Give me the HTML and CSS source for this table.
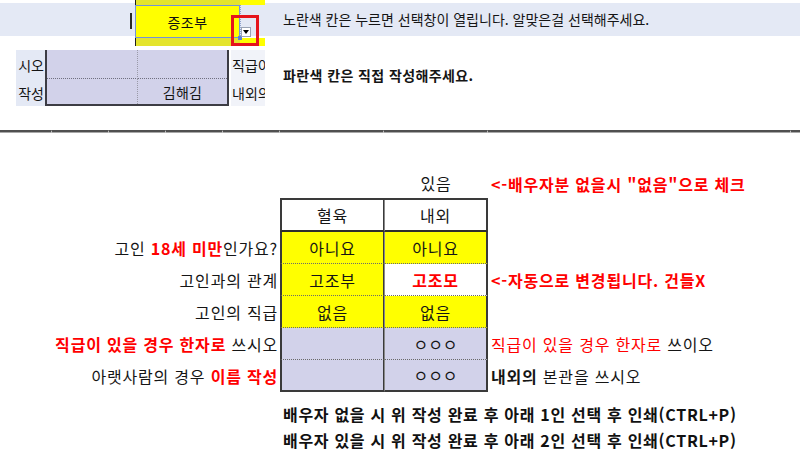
FILE: index.html
```html
<!DOCTYPE html>
<html lang="ko">
<head>
<meta charset="utf-8">
<title>시트</title>
<link rel="stylesheet" href="styles.css">
</head>
<body>
<div class="top">
  <div class="r1">
    <div class="lead"><span class="caret"></span></div>
    <div class="ycell">
      <div class="ystrip top-strip"></div>
      <div class="ysel">증조부</div>
      <div class="ystrip bot-strip"></div>
    </div>
    <div class="yright">
      <div class="yr-top"></div>
      <div class="yr-mid"></div>
      <div class="yr-bot"></div>
    </div>
    <div class="note1">노란색 칸은 누르면 선택창이 열립니다. 알맞은걸 선택해주세요.</div>
    <span class="handle"></span>
    <span class="dd"><span class="tri"></span></span>
    <span class="redbox"></span>
  </div>
  <div class="r2">
    <div class="pad"></div>
    <div class="lbl">
      <div class="lc lc1">시오</div>
      <div class="lc lc2">작성</div>
    </div>
    <div class="lav">
      <div class="lv a"></div>
      <div class="lv b"></div>
      <div class="lv c"></div>
      <div class="lv d">김해김</div>
    </div>
    <div class="clip">
      <div class="cc cc1"><span>직급이</span></div>
      <div class="cc cc2"><span>내외의</span></div>
    </div>
    <div class="note2">파란색 칸은 직접 작성해주세요.</div>
  </div>
</div>

<div class="divider">
  <span class="seg" style="width:52px"></span>
  <span class="seg" style="width:57px"></span>
  <span class="seg" style="width:57px"></span>
  <span class="seg" style="width:57px"></span>
  <span class="seg" style="width:57px"></span>
  <span class="seg" style="width:104px"></span>
  <span class="seg" style="width:104px"></span>
  <span class="seg" style="width:303px"></span>
  <span class="seg seg-last"></span>
</div>

<div class="grid">
  <div class="lab"></div>
  <div class="blank"></div>
  <div class="above">있음</div>
  <div class="nt red b">&lt;-배우자분 없을시 "없음"으로 체크</div>

  <div class="lab"></div>
  <div class="t t1 head">혈육</div>
  <div class="t t2 head">내외</div>
  <div class="nt"></div>

  <div class="lab">고인&nbsp;<span class="red b">18세 미만</span>인가요?</div>
  <div class="t t1 yel">아니요</div>
  <div class="t t2 yel">아니요</div>
  <div class="nt"></div>

  <div class="lab">고인과의 관계</div>
  <div class="t t1 yel">고조부</div>
  <div class="t t2 red b">고조모</div>
  <div class="nt red b">&lt;-자동으로 변경됩니다. 건들X</div>

  <div class="lab">고인의 직급</div>
  <div class="t t1 yel">없음</div>
  <div class="t t2 yel">없음</div>
  <div class="nt"></div>

  <div class="lab"><span class="red b">직급이 있을 경우 한자로</span>&nbsp;쓰시오</div>
  <div class="t t1 lavc"></div>
  <div class="t t2 lavc">ㅇㅇㅇ</div>
  <div class="nt"><span class="red">직급이 있을 경우 한자로</span>&nbsp;쓰이오</div>

  <div class="lab">아랫사람의 경우&nbsp;<span class="red b">이름 작성</span></div>
  <div class="t t1 lavc last">&nbsp;</div>
  <div class="t t2 lavc last">ㅇㅇㅇ</div>
  <div class="nt"><span class="b">내외의</span>&nbsp;본관을 쓰시오</div>
</div>

<div class="foot">
  <div>배우자 없을 시 위 작성 완료 후 아래 1인 선택 후 인쇄(CTRL+P)</div>
  <div>배우자 있을 시 위 작성 완료 후 아래 2인 선택 후 인쇄(CTRL+P)</div>
</div>
</body>
</html>
```

FILE: styles.css
```css
* { box-sizing: border-box; }
html, body { margin: 0; padding: 0; }
body {
  width: 800px;
  height: 470px;
  overflow: hidden;
  background: #ffffff;
  color: #141414;
  font-family: "Noto Sans CJK KR", "Noto Sans", sans-serif;
}

/* ---------- top area ---------- */
.top { height: 130px; }

.r1 {
  position: relative;
  display: flex;
  height: 46px;
  background: linear-gradient(#ffffff 0 3px, #e4e9f5 3px 36px, #ffffff 36px);
}
.lead {
  width: 135px;
  display: flex;
  justify-content: flex-end;
  align-items: flex-start;
  padding-top: 13px;
  padding-right: 3px;
}
.caret { display: block; width: 2px; height: 16px; background: #2a2a2a; }

.ycell { width: 105px; display: flex; flex-direction: column; }
.ystrip { background: #e4e42c; border-left: 1px solid #1e1e1e; }
.top-strip { height: 5px; }
.bot-strip { height: 8px; }
.ysel {
  height: 33px;
  background: #ffff00;
  border: 1px solid #7393d9;
  display: flex;
  align-items: center;
  justify-content: center;
  font-size: 14px;
  letter-spacing: 0.5px;
  color: #111;
}

.yright { width: 25px; display: flex; flex-direction: column; }
.yr-top { height: 5px; background: #ffff00; }
.yr-mid { height: 33px; border-left: 1px dotted #8ea3cf; }
.yr-bot { height: 8px; background: #ffff00; }

.note1 {
  margin-top: 3px;
  height: 33px;
  line-height: 33px;
  padding-left: 18px;
  font-size: 14px;
  color: #151515;
  white-space: nowrap;
}

.handle {
  position: absolute;
  left: 238px; top: 36px;
  width: 4px; height: 4px;
  background: #5b80d2;
}
.dd {
  position: absolute;
  left: 241px; top: 27px;
  width: 10px; height: 10px;
  background: #ffffff;
  border: 1px solid #9aa4b4;
  display: flex;
  align-items: center;
  justify-content: center;
}
.tri {
  display: block;
  width: 0; height: 0;
  border-left: 3px solid transparent;
  border-right: 3px solid transparent;
  border-top: 4px solid #000;
}
.redbox {
  position: absolute;
  left: 231px; top: 15px;
  width: 28px; height: 31px;
  border: 3px solid #e5141c;
}

.r2 { display: flex; margin-top: 4px; height: 56px; }
.pad { width: 16px; }
.lbl { width: 29px; background: #e4e9f5; display: flex; flex-direction: column; }
.lc {
  font-size: 14px;
  display: flex;
  align-items: center;
  justify-content: flex-end;
  padding-right: 1px;
  white-space: nowrap;
  overflow: hidden;
}
.lc1 { height: 29px; }
.lc2 { height: 27px; }

.lav {
  width: 184px;
  background: #d2d2ea;
  border: 2px solid #3c3c44;
  border-top: none;
  display: grid;
  grid-template-columns: 91px 1fr;
  grid-template-rows: 29px 1fr;
}
.lv { display: flex; align-items: center; justify-content: center; font-size: 14px; letter-spacing: 0.3px; }
.lv.a, .lv.b { border-bottom: 1px dotted #707080; }
.lv.a, .lv.c { border-right: 1px dotted #9a9aa8; }

.clip {
  width: 34px;
  margin-left: 2px;
  overflow: hidden;
  display: flex;
  flex-direction: column;
  background: #f1f3f9;
}
.cc {
  font-size: 14px;
  display: flex;
  align-items: center;
  padding-left: 1px;
  width: 60px;
  white-space: nowrap;
}
.cc1 { height: 29px; }
.cc2 { height: 27px; }

.note2 {
  padding-left: 18px;
  margin-top: 16px;
  height: 18px;
  line-height: 18px;
  font-size: 14px;
  font-weight: 700;
  letter-spacing: 0.4px;
  color: #151515;
  white-space: nowrap;
}

/* ---------- frozen pane divider ---------- */
.divider { display: flex; height: 3px; }
.seg {
  display: block;
  height: 3px;
  border-top: 2px solid #505050;
  border-bottom: 1px solid #a8a8a8;
  border-right: 1px solid #e0e0e0;
}
.seg-last { flex: 1; border-right: none; }

/* ---------- bottom table ---------- */
.grid {
  margin-top: 35px;
  display: grid;
  grid-template-columns: 280px 104px 104px 1fr;
  grid-auto-rows: 32px;
  font-size: 16px;
  letter-spacing: 0.8px;
  color: #151515;
}
.grid > div { display: flex; align-items: center; white-space: nowrap; }
.lab { justify-content: flex-end; padding-right: 2px; }
.above { justify-content: center; border-bottom: 2px solid #3a3a3a; }
.blank { border-bottom: 2px solid #3a3a3a; }
.nt { padding-left: 3px; }

.t { justify-content: center; border-bottom: 1px dotted #6a6a6a; }
.t1 { border-left: 2px solid #3a3a3a; border-right: 1px solid #3a3a3a; }
.t2 { border-left: 1px solid #8a8a8a; border-right: 2px solid #3a3a3a; }
.head { background: #ffffff; border-bottom: 2px solid #2e2e2e; }
.yel { background: #ffff00; }
.lavc { background: #d2d2ea; letter-spacing: 0; }
.last { border-bottom: 2px solid #3a3a3a; }

.red { color: #ff0000; }
.b { font-weight: 700; }

.foot {
  padding-top: 9px;
  padding-left: 283px;
  font-size: 16px;
  line-height: 26px;
  font-weight: 700;
  letter-spacing: 0.7px;
  color: #111;
  white-space: nowrap;
}
```
